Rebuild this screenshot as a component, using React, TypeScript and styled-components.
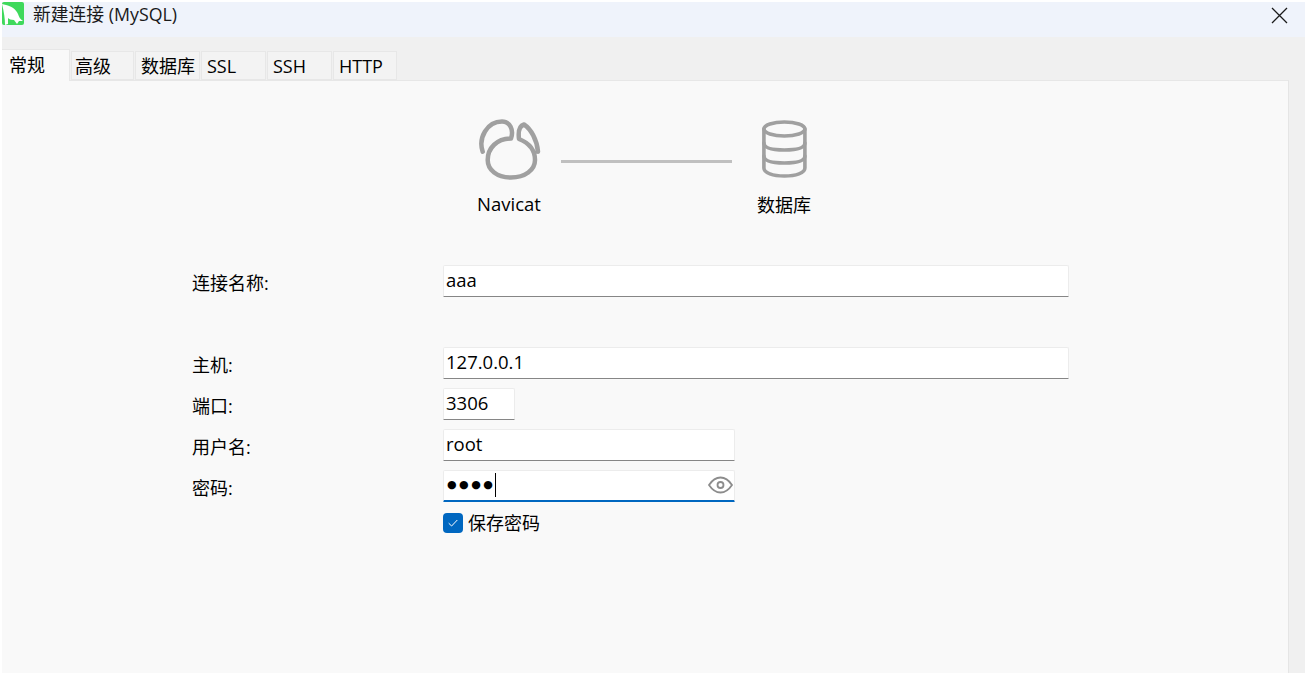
import React from 'react';
import styled, { createGlobalStyle } from 'styled-components';

const GlobalStyle = createGlobalStyle`
    html, body {
        margin: 0;
        padding: 0;
        background: #fff;
    }
    body {
        font-family: "Open Sans", "Noto Sans CJK SC", sans-serif;
        color: #000;
    }
`;

const Window = styled.div`
    width: 1305px;
    height: 673px;
    overflow: hidden;
    display: flex;
    flex-direction: column;
    padding: 2px 0 0 2px;
    box-sizing: border-box;
    background: #fff;
`;

const TitleBar = styled.div`
    height: 35px;
    flex: none;
    display: flex;
    align-items: flex-start;
    background: #eff3fb;
`;

const TitleText = styled.div`
    font-size: 17.8px;
    line-height: 24px;
    margin-left: 9px;
    color: #1a1a1a;
`;

const Logo = styled.svg`
    width: 22px;
    height: 23px;
    display: block;
    flex: none;
`;

const CloseButton = styled.button`
    margin-left: auto;
    margin-right: 17px;
    margin-top: 4px;
    width: 18px;
    height: 18px;
    padding: 0;
    border: 0;
    background: none;
    display: block;
`;

const Body = styled.div`
    flex: 1;
    display: flex;
    flex-direction: column;
    background: #f0f0f0;
    min-height: 0;
`;

const TabStrip = styled.div`
    height: 43px;
    flex: none;
    display: flex;
    align-items: flex-end;
    gap: 1px;
`;

const Tab = styled.div<{ $active?: boolean; $width: number; $pad: number }>`
    width: ${p => p.$width}px;
    height: ${p => (p.$active ? 32 : 29)}px;
    box-sizing: border-box;
    padding-left: ${p => p.$pad}px;
    font-size: 18px;
    line-height: ${p => (p.$active ? 30 : 29)}px;
    white-space: nowrap;
    background: ${p => (p.$active ? '#f9f9f9' : '#f3f3f3')};
    border: 1px solid #e7e7e7;
    border-bottom: ${p => (p.$active ? '0' : '1px solid #e7e7e7')};
    border-left: ${p => (p.$active ? '0' : '1px solid #e7e7e7')};
    margin-bottom: ${p => (p.$active ? -1 : 0)}px;
    position: relative;
    z-index: ${p => (p.$active ? 1 : 0)};
`;

const Panel = styled.div`
    width: 1287px;
    flex: 1;
    box-sizing: border-box;
    background: #f9f9f9;
    border-top: 1px solid #e7e7e7;
    border-right: 1px solid #e5e5e5;
    display: flex;
    flex-direction: column;
    padding-top: 37px;
    padding-left: 190px;
`;

const Diagram = styled.div`
    display: grid;
    grid-template-columns: 100px 171px 100px;
    column-gap: 2px;
    margin-left: 267px;
    width: 375px;
`;

const Node = styled.div`
    display: flex;
    flex-direction: column;
    align-items: center;
`;

const NodeIcon = styled.svg<{ $stroke: number }>`
    width: 64px;
    height: 64px;
    display: block;
    fill: none;
    stroke: #a0a0a0;
    stroke-width: ${p => p.$stroke};
    stroke-linecap: round;
    stroke-linejoin: round;
`;

const NodeLabel = styled.div<{ $latin?: boolean }>`
    font-size: ${p => (p.$latin ? 18.5 : 18)}px;
    line-height: 26px;
    margin-top: ${p => (p.$latin ? 9 : 10)}px;
`;

const Connector = styled.div`
    height: 3px;
    background: #c0c0c0;
    margin-top: 42px;
`;

const Form = styled.div`
    margin-top: 47px;
    display: flex;
    flex-direction: column;
`;

const Row = styled.div<{ $gap?: number }>`
    display: grid;
    grid-template-columns: 251px 1fr;
    align-items: start;
    margin-bottom: ${p => p.$gap ?? 9}px;
`;

const Label = styled.div`
    font-size: 18px;
    line-height: 25px;
    padding-top: 6px;
`;

const Field = styled.div<{ $width: number; $focused?: boolean }>`
    width: ${p => p.$width}px;
    height: 32px;
    box-sizing: border-box;
    background: #fff;
    border: 1px solid #ececec;
    border-bottom: ${p => (p.$focused ? '2px solid #0067c0' : '1px solid #868686')};
    border-radius: 2px 2px 1px 1px;
    padding: 0 0 2px 2px;
    font-size: 18.5px;
    line-height: 28px;
    display: flex;
    align-items: center;
`;

const Dots = styled.span`
    font-family: "DejaVu Sans", sans-serif;
    font-size: 11px;
    letter-spacing: 2.5px;
    line-height: 28px;
    margin-left: 1px;
`;

const Caret = styled.span`
    width: 1px;
    height: 24px;
    background: #000;
`;

const EyeIcon = styled.svg`
    margin-left: auto;
    margin-right: 1px;
    width: 25px;
    height: 18px;
    fill: none;
    stroke: #8c8c8c;
    stroke-width: 1.8;
`;

const CheckRow = styled.div`
    display: flex;
    align-items: center;
    margin-left: 251px;
    margin-top: 2px;
    gap: 5px;
    font-size: 18px;
    line-height: 20px;
`;

const CheckBox = styled.span`
    width: 20px;
    height: 20px;
    border-radius: 4px;
    background: #0067c0;
    display: flex;
    align-items: center;
    justify-content: center;
`;

const tabs = [
    { name: '常规', width: 68, pad: 7, active: true },
    { name: '高级', width: 63, pad: 3 },
    { name: '数据库', width: 65, pad: 5 },
    { name: 'SSL', width: 65, pad: 5 },
    { name: 'SSH', width: 65, pad: 5 },
    { name: 'HTTP', width: 64, pad: 5 }
];

export default function App() {
    return (
        <Window>
            <GlobalStyle />
            <TitleBar>
                <Logo viewBox="0 0 22 23">
                    <rect width="22" height="23" rx="2" fill="#3fd95c" />
                    <path d="M0 2 L4 3 C9 4 14 7 16 12 C17 15 18 17 21 19 L17 19 L15 22 L12 18 C9 18 7 17 6 16 L6 22 L3 23 C3 17 2 10 0 2 Z" fill="#fff" />
                </Logo>
                <TitleText>新建连接 (MySQL)</TitleText>
                <CloseButton aria-label="close">
                    <svg width="18" height="18" viewBox="0 0 18 18">
                        <path d="M2 2 L17 17 M17 2 L2 17" stroke="#1a1a1a" strokeWidth="1.3" fill="none" />
                    </svg>
                </CloseButton>
            </TitleBar>
            <Body>
                <TabStrip>
                    {tabs.map(t => (
                        <Tab key={t.name} $active={t.active} $width={t.width} $pad={t.pad}>{t.name}</Tab>
                    ))}
                </TabStrip>
                <Panel>
                    <Diagram>
                        <Node>
                            <NodeIcon viewBox="0 0 64 64" $stroke={4.5}>
                                <path d="M5.7 33.7 C1 20 10 3.5 25 3.5 C33 3.5 37 12 34 20.5 C20 20.5 10.7 30 10.7 42 C10.7 52 20 59.5 34 59.5 C48 59.5 58 52 58 42 C58 32 52 25 42 21 C41 13 42 8 47 6.5 C54 11 60 22 61 33.7" />
                            </NodeIcon>
                            <NodeLabel $latin>Navicat</NodeLabel>
                        </Node>
                        <Connector />
                        <Node>
                            <NodeIcon viewBox="0 0 64 64" $stroke={3.6}>
                                <ellipse cx="32.4" cy="11" rx="20.5" ry="7" />
                                <path d="M11.9 11 V50 C11.9 55 21 58 32.4 58 C44 58 52.9 55 52.9 50 V11" />
                                <path d="M11.9 25 C11.9 30 21 32 32.4 32 C44 32 52.9 30 52.9 25" />
                                <path d="M11.9 38 C11.9 43 21 45 32.4 45 C44 45 52.9 43 52.9 38" />
                            </NodeIcon>
                            <NodeLabel>数据库</NodeLabel>
                        </Node>
                    </Diagram>
                    <Form>
                        <Row $gap={50}>
                            <Label>连接名称:</Label>
                            <Field $width={626}>aaa</Field>
                        </Row>
                        <Row>
                            <Label>主机:</Label>
                            <Field $width={626}>127.0.0.1</Field>
                        </Row>
                        <Row>
                            <Label>端口:</Label>
                            <Field $width={72}>3306</Field>
                        </Row>
                        <Row>
                            <Label>用户名:</Label>
                            <Field $width={292}>root</Field>
                        </Row>
                        <Row>
                            <Label>密码:</Label>
                            <Field $width={292} $focused>
                                <Dots>●●●●</Dots>
                                <Caret />
                                <EyeIcon viewBox="0 0 25 18">
                                    <path d="M1 9 C5 3 9 1.5 12.5 1.5 C16 1.5 20 3 24 9 C20 15 16 16.5 12.5 16.5 C9 16.5 5 15 1 9 Z" />
                                    <circle cx="12.5" cy="9" r="3" />
                                </EyeIcon>
                            </Field>
                        </Row>
                        <CheckRow>
                            <CheckBox>
                                <svg width="10" height="8" viewBox="0 0 10 8">
                                    <path d="M0.7 4.2 L3.6 7 L9.3 1" stroke="#fff" strokeWidth="1" fill="none" />
                                </svg>
                            </CheckBox>
                            保存密码
                        </CheckRow>
                    </Form>
                </Panel>
            </Body>
        </Window>
    );
}
